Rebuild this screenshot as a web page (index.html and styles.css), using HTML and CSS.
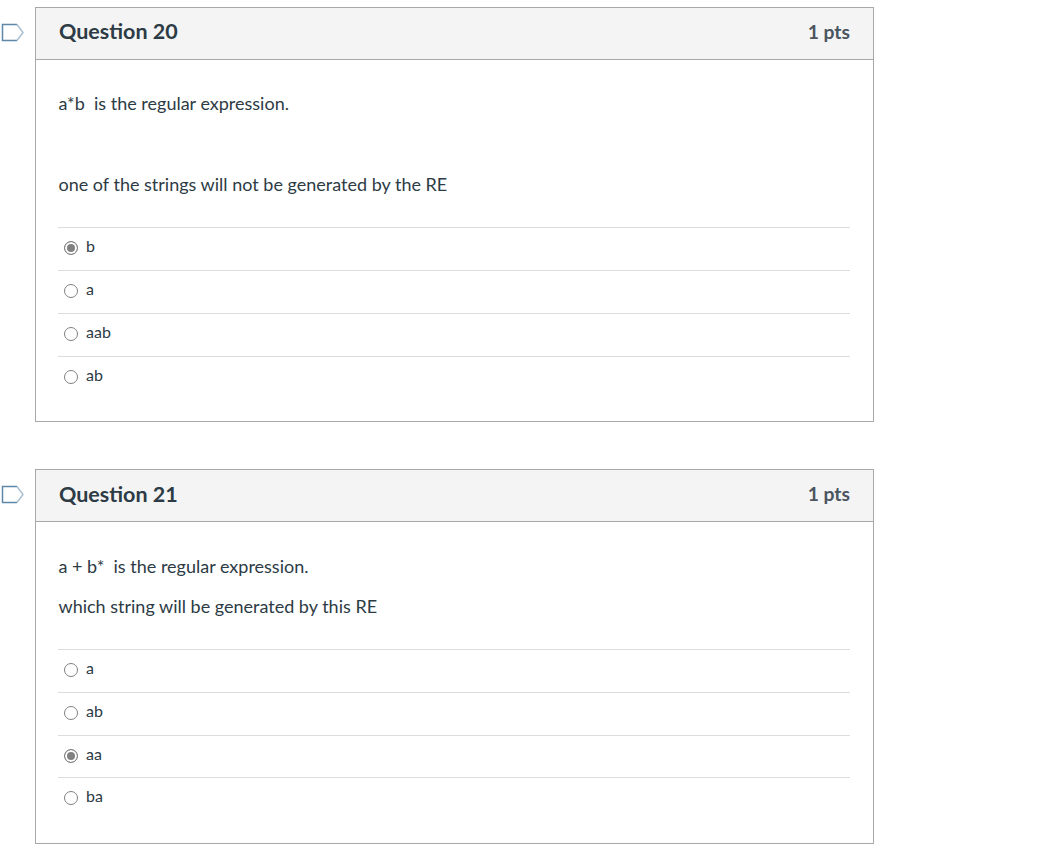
FILE: index.html
```html
<!DOCTYPE html>
<html lang="en">
<head>
    <meta charset="UTF-8">
    <meta name="viewport" content="width=device-width, initial-scale=1.0">
    <title>Quiz</title>
    <link rel="stylesheet" href="styles.css">
</head>
<body>
    <div class="question">
        <svg class="flag" width="24" height="19" viewBox="0 0 24 19">
            <path class="flag-left" d="M17 1.5H2.5V17.5H17"/>
            <path class="flag-tip" d="M17 1.5L23 9.5L17 17.5"/>
        </svg>
        <div class="card">
            <div class="card-header">
                <h2>Question 20</h2>
                <div class="pts">1 pts</div>
            </div>
            <div class="card-body q20">
                <p class="first">a*b&nbsp; is the regular expression.</p>
                <p class="second">one of the strings will not be generated by the RE</p>
                <div class="answers">
                    <div class="answer"><span class="radio checked"></span><span class="label">b</span></div>
                    <div class="answer"><span class="radio"></span><span class="label">a</span></div>
                    <div class="answer"><span class="radio"></span><span class="label">aab</span></div>
                    <div class="answer"><span class="radio"></span><span class="label">ab</span></div>
                </div>
            </div>
        </div>
    </div>

    <div class="question">
        <svg class="flag" width="24" height="19" viewBox="0 0 24 19">
            <path class="flag-left" d="M17 1.5H2.5V17.5H17"/>
            <path class="flag-tip" d="M17 1.5L23 9.5L17 17.5"/>
        </svg>
        <div class="card">
            <div class="card-header">
                <h2>Question 21</h2>
                <div class="pts">1 pts</div>
            </div>
            <div class="card-body q21">
                <p class="first">a + b*&nbsp; is the regular expression.</p>
                <p class="second">which string will be generated by this RE</p>
                <div class="answers">
                    <div class="answer"><span class="radio"></span><span class="label">a</span></div>
                    <div class="answer"><span class="radio"></span><span class="label">ab</span></div>
                    <div class="answer"><span class="radio checked"></span><span class="label">aa</span></div>
                    <div class="answer"><span class="radio"></span><span class="label">ba</span></div>
                </div>
            </div>
        </div>
    </div>
</body>
</html>
```

FILE: styles.css
```css
body {
    margin: 0;
    padding-top: 6.7px;
    background-color: white;
    font-family: Lato, "Open Sans", sans-serif;
    color: #2d3b45;
}
.question {
    display: flex;
    align-items: flex-start;
    margin-bottom: 47px;
}
.flag {
    width: 24px;
    height: 19px;
    margin-top: 16px;
    margin-right: 11px;
    fill: none;
    stroke-width: 1.5;
}
.flag-left {
    stroke: #5f88a8;
}
.flag-tip {
    stroke: #a9c0d2;
}
.card {
    width: 837px;
    border: 1px solid #a8a8a8;
}
.card-header {
    display: flex;
    justify-content: space-between;
    align-items: center;
    height: 47px;
    padding: 0 23px 4px;
    background-color: #f4f4f4;
    border-bottom: 1px solid #a8a8a8;
}
h2 {
    margin: 0;
    font-size: 21.5px;
    font-weight: bold;
}
.pts {
    font-size: 19.3px;
    font-weight: bold;
    color: #4a5560;
}
.card-body {
    padding: 0 23px 0 22px;
}
p {
    margin: 0;
    padding-left: 0.5px;
    font-size: 18px;
    line-height: 24px;
}
.q20 .first {
    padding-top: 31.3px;
}
.q20 .second {
    padding-top: 57px;
}
.q20 .answers {
    margin-top: 31.4px;
    padding-bottom: 22.5px;
}
.q21 .first {
    padding-top: 32px;
}
.q21 .second {
    padding-top: 16px;
}
.q21 .answers {
    margin-top: 31px;
    padding-bottom: 22.5px;
}
.answer {
    display: flex;
    align-items: center;
    height: 39.8px;
    padding-bottom: 2px;
    border-top: 1px solid #dcdcdc;
    font-size: 16px;
}
.label {
    margin-bottom: 5px;
}
.radio {
    box-sizing: border-box;
    width: 14px;
    height: 14px;
    margin-left: 6px;
    margin-right: 8px;
    border: 1px solid #808080;
    border-radius: 50%;
    background-color: white;
}
.checked {
    background-color: #808080;
    box-shadow: inset 0 0 0 2px white;
}
```
